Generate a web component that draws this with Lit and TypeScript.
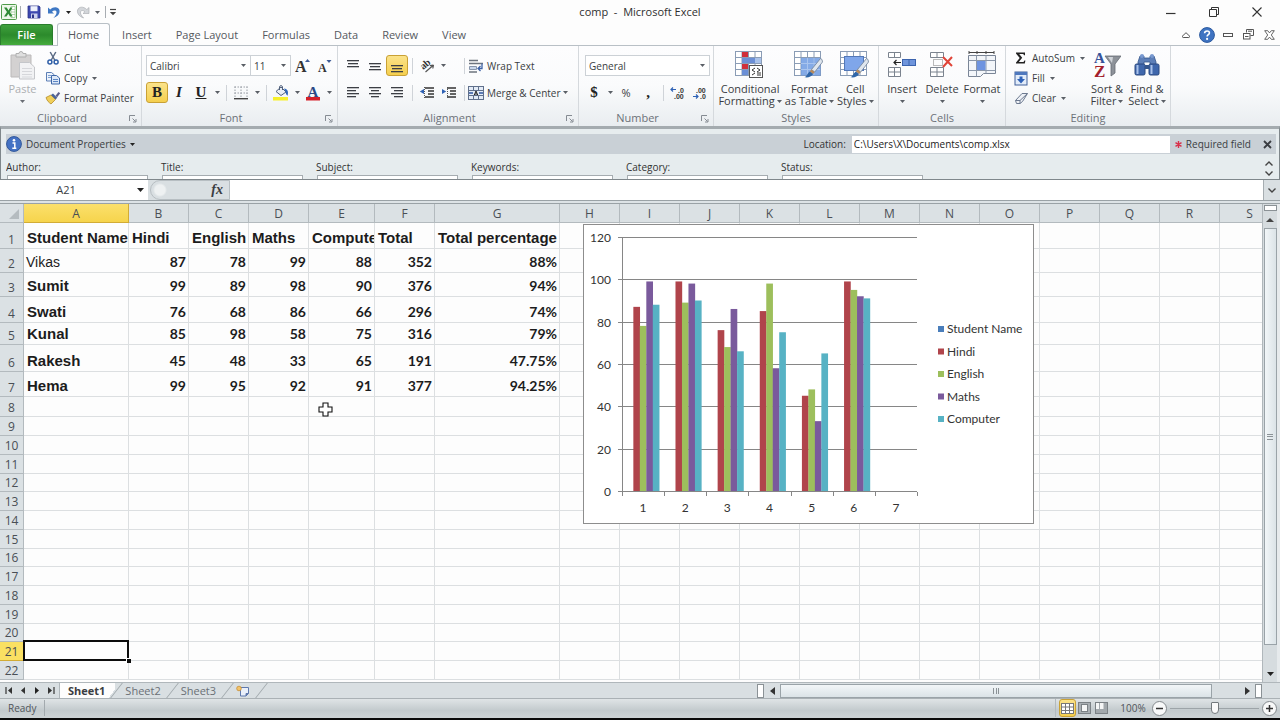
import { LitElement, html, svg, css, nothing } from "lit";
import { customElement, state } from "lit/decorators.js";
import { classMap } from "lit/directives/class-map.js";
import { styleMap } from "lit/directives/style-map.js";

/* ---------- icons ---------- */
const icon = (w: number, h: number, body: unknown) =>
  html`<svg width=${w} height=${h} viewBox="0 0 ${w} ${h}" aria-hidden="true">${body}</svg>`;

const caret = () => icon(5, 3, svg`<path d="M0 0h5L2.500 3z" fill="#5a5f66"/>`);

const linesIcon = (rows: [number, number, number][]) =>
  icon(14, 14, rows.map(([x, y, w]) => svg`<rect x=${x} y=${y} width=${w} height="1.300" fill="#3c3f45"/>`));

const gridCells = (w: number, h: number, cols: number, rows: number) => svg`
  <rect x=".5" y=".5" width=${w} height=${h} fill="#fff" stroke="#8a9cb5"/>
  ${Array.from({ length: cols - 1 }, (_, i) => svg`<path d="M${((i + 1) * w) / cols + 0.5} .5v${h}" stroke="#8a9cb5" fill="none"/>`)}
  ${Array.from({ length: rows - 1 }, (_, i) => svg`<path d="M.5 ${((i + 1) * h) / rows + 0.5}h${w}" stroke="#8a9cb5" fill="none"/>`)}`;

const brush = svg`
  <path d="M28 8.500 26.500 7.500 17.500 18.500l3.200 2.600L28.500 11z" fill="#dfe6ee" stroke="#6d7f96" stroke-width=".8"/>
  <path d="M17.500 18.500l3.200 2.600-1.700 2-3.300-2.500z" fill="#b98a5a"/>
  <path d="M15.700 20.400l3.400 2.700c-1.600 3-5.200 3.700-8.600 3.200 2.600-1.300 2.900-4.300 5.200-5.900z" fill="#2f66a8"/>`;

const I = {
  excel: icon(16, 16, svg`
    <rect x=".5" y=".5" width="15" height="15" rx="1" fill="#eef7ea" stroke="#4f9a4a"/>
    <path d="M10 2.500h4v11h-4z" fill="#fff" stroke="#8fc28a" stroke-width=".7"/>
    <path d="M10 5.500h4M10 8h4M10 10.500h4" stroke="#8fc28a" stroke-width=".7"/>
    <path d="M3 3.500h2.700L7.500 6.500 9.200 3.500h2.300L8.800 8l2.900 4.500H9L7.300 9.700 5.500 12.500H3L6 8z" fill="#2f8a35"/>`),
  save: icon(14, 14, svg`
    <path d="M1 1h11l1 1v11H1z" fill="#3d49b0" stroke="#2c3488" stroke-width=".8"/>
    <rect x="3.500" y="1.200" width="7" height="5" fill="#eef1fb"/>
    <rect x="4" y="8.500" width="6.500" height="4.500" fill="#cdd3ee"/>
    <rect x="5" y="9.500" width="2" height="3.500" fill="#2c3488"/>`),
  undo: icon(14, 14, svg`
    <path d="M1 2.500v6h6L5 6.700C6.500 5.300 8.800 5 9.400 6.600c.6 1.800-.6 4-3 6.400C11 11.500 13.200 8.200 12.400 5 11.300 1.400 6.300 1.200 3.200 4.600z" fill="#3f78c4"/>`),
  redo: icon(14, 14, svg`
    <path d="M13 2.500v6H7l2-1.800C7.500 5.300 5.200 5 4.600 6.600c-.6 1.800.6 4 3 6.400C3 11.500.8 8.200 1.600 5 2.700 1.400 7.700 1.200 10.800 4.600z" fill="#d3d6da" stroke="#a4a8ad" stroke-width=".6"/>`),
  customise: icon(8, 8, svg`<path d="M1 1.500h6" stroke="#444" stroke-width="1.200"/><path d="M.8 4h6.400L4 7.200z" fill="#444"/>`),
  min: icon(10, 10, svg`<path d="M0 6.500h9.500" stroke="#333" stroke-width="1.200"/>`),
  restore: icon(10, 10, svg`<path d="M.5 2.500h7v7h-7zM2.500 2.500v-2h7v7h-2" fill="none" stroke="#333"/>`),
  close: icon(10, 10, svg`<path d="M.5.500l9 9M9.500.500l-9 9" stroke="#333" stroke-width="1.100"/>`),
  collapse: icon(10, 8, svg`<path d="M1 5.500 5 1.700l4 3.800-1.200 1H2.200z" fill="#fff" stroke="#555"/>`),
  help: icon(16, 16, svg`
    <circle cx="8" cy="8" r="7.400" fill="#3f74c2" stroke="#2c5a9f"/>
    <path d="M5.600 6.200C5.700 3.300 10.500 3.300 10.400 6c0 1.600-2.300 1.700-2.300 3.500" fill="none" stroke="#fff" stroke-width="1.600"/>
    <circle cx="8.100" cy="11.900" r="1.100" fill="#fff"/>`),
  docMin: icon(10, 6, svg`<rect x=".5" y="1.500" width="9" height="3" fill="#fff" stroke="#555"/>`),
  docRestore: icon(11, 11, svg`<path d="M3.500 3.500v-3h7v6h-3M5 2.200h4" fill="none" stroke="#555"/><rect x=".5" y="4.500" width="6.500" height="5.500" fill="#fff" stroke="#555"/><path d="M2 7.500h3.500" stroke="#555"/>`),
  docClose: icon(11, 10, svg`<path d="M.7.700h3l1.800 2.200L7.300.700h3L7.300 5l3 4.300h-3L5.500 7.100 3.700 9.300h-3L3.700 5z" fill="#fff" stroke="#555" stroke-width=".9"/>`),
  paste: icon(26, 30, svg`
    <path d="M1 4h20v22H1z" fill="#cfcdcd" stroke="#b5b3b3"/>
    <path d="M6 2.500h3a2 2 0 0 1 4 0h3V6H6z" fill="#dcdcdc" stroke="#a8a8a8"/>
    <path d="M9.500 11.500h10l5 4.500v12h-15z" fill="#f1f2f4" stroke="#bfc1c5"/>
    <path d="M12 17.500h10M12 20.500h10M12 23.500h10M12 26h10" stroke="#d2d4d8"/>`),
  cut: icon(14, 14, svg`
    <path d="M4.200 1 9 9.500M9.800 1 5 9.500" stroke="#5b6b85" stroke-width="1.500"/>
    <circle cx="3.900" cy="11" r="2" fill="none" stroke="#2f5fa8" stroke-width="1.500"/>
    <circle cx="10.100" cy="11" r="2" fill="none" stroke="#2f5fa8" stroke-width="1.500"/>`),
  copy: icon(16, 14, svg`
    <path d="M1.500 1.500h5l3 2.500v6h-8z" fill="#eaf1fb" stroke="#5c7fb5"/><path d="M3 4.500h3M3 6.500h4" stroke="#7fa0d0"/>
    <path d="M6.500 4.500h5l3 2.500v6h-8z" fill="#dce8f8" stroke="#3f68a8"/><path d="M8 8.500h5M8 10.500h5" stroke="#5c86c4"/>`),
  painter: icon(16, 14, svg`
    <path d="M1 6.500 6 4l4.500 4.500L6 13C4 11.500 2 10 1 6.500z" fill="#f0cf5a" stroke="#b48a28" stroke-width=".8"/>
    <path d="M6 4l2-1.500 4.300 4.300-1.800 1.700z" fill="#49659a"/>
    <path d="M10.500 4.800 13.500 1l1.700 1.300-3 4z" fill="#5a5f8c"/>`),
  growA: icon(16, 16, svg`<text x="0" y="14" font-family="Liberation Serif, serif" font-size="16" font-weight="700" fill="#333">A</text><path d="M10 4l2.500-3L15 4z" fill="#3d5b96"/>`),
  shrinkA: icon(16, 16, svg`<text x="1" y="14" font-family="Liberation Serif, serif" font-size="12" font-weight="700" fill="#333">A</text><path d="M9.500 2h5L12 5z" fill="#3d5b96"/>`),
  borders: icon(14, 14, svg`<path d="M.5 1h13M.5 7h13M1 .5v12M7 .5v12M13 .5v12" stroke="#9a9fa6" stroke-dasharray="1.500 1.500" fill="none"/><path d="M0 12.700h14" stroke="#444" stroke-width="1.400"/>`),
  fill: icon(16, 16, svg`
    <path d="M3 6.500 8 2l5 5-5 3.500z" fill="#e9eef5" stroke="#51617c"/><path d="M6.500 5V1.800c0-1.500 3-1.500 3 0V5" fill="none" stroke="#51617c"/>
    <path d="M11 3.500c3.800.3 4.700 3.500 3.600 7.200-1.200-.7-2-2.200-2-4z" fill="#2f66b8"/><rect x="0" y="12" width="15" height="3.500" fill="#f7f02a"/>`),
  fontColor: icon(16, 16, svg`<text x="2.500" y="11.500" font-family="Liberation Serif, serif" font-size="15" font-weight="700" fill="#2c4a86">A</text><rect x="1" y="12" width="14" height="3.500" fill="#d5202a"/>`),
  alTop: linesIcon([[1, 1, 12], [2, 4, 10], [1, 7, 12]]),
  alMid: linesIcon([[1, 4, 12], [2, 7, 10], [1, 10, 12]]),
  alBot: linesIcon([[1, 6, 12], [2, 9, 10], [1, 12, 12]]),
  left: linesIcon([[1, 1, 12], [1, 4, 9], [1, 7, 12], [1, 10, 9]]),
  center: linesIcon([[1, 1, 12], [3, 4, 8], [1, 7, 12], [3, 10, 8]]),
  right: linesIcon([[1, 1, 12], [4, 4, 9], [1, 7, 12], [4, 10, 9]]),
  orient: icon(16, 16, svg`<text x="2" y="10" font-family="Liberation Serif, serif" font-size="10" font-weight="700" fill="#333" transform="rotate(-40 6 8)">ab</text><path d="M6.500 14 14 7.500M14.500 7l-3.500.7M14.500 7l-.7 3.500" stroke="#555" stroke-width="1.200" fill="none"/>`),
  dedent: icon(16, 14, svg`<path d="M6 2h9M9 5h6M9 8h6M6 11h9" stroke="#333" stroke-width="1.400"/><path d="M5.500 1v12" stroke="#555" stroke-dasharray="1 1"/><path d="M5 3v5L.800 5.500z" fill="#2f62b5"/>`),
  indent: icon(16, 14, svg`<path d="M6 2h9M9 5h6M9 8h6M6 11h9" stroke="#333" stroke-width="1.400"/><path d="M6.500 1v12" stroke="#555" stroke-dasharray="1 1"/><path d="M1 3v5l4.200-2.500z" fill="#2f62b5"/>`),
  wrap: icon(16, 16, svg`<path d="M1 2.500h9M1 5.500h14M1 14h8" stroke="#6d747e" stroke-width="1.400"/><path d="M1.500 8.500h7v3h-7z" fill="#c8d6ea" stroke="#8896ac"/><path d="M14 5.500v5h-4M12.500 8 10 10.500l2.500 2.500" fill="none" stroke="#3d62a6" stroke-width="1.300"/>`),
  merge: icon(16, 16, svg`<rect x=".5" y="1.500" width="15" height="13" fill="#e4ecf7" stroke="#60708c"/><path d="M.5 5.500h15M.5 10.500h15M5.500 1.500v4M10.500 1.500v4M5.500 10.500v4M10.500 10.500v4" stroke="#60708c"/><path d="M1 8h4M15 8h-4" stroke="#2f55a0" stroke-width="1.500"/><path d="M6.300 10 8 6l1.700 4M7 9h2" stroke="#222" fill="none"/>`),
  incDec: icon(16, 14, svg`<path d="M1 3.500h5M3 1.500 1 3.500l2 2" stroke="#2f62b5" fill="none" stroke-width="1.200"/>
    <text x="8" y="6.500" font-family="Liberation Sans, sans-serif" font-size="7" font-weight="700" fill="#333">.0</text><text x="4" y="13" font-family="Liberation Sans, sans-serif" font-size="7" font-weight="700" fill="#333">.00</text>`),
  decDec: icon(16, 14, svg`<path d="M1 10.500h5M4 8.500l2 2-2 2" stroke="#2f62b5" fill="none" stroke-width="1.200"/>
    <text x="4" y="6.500" font-family="Liberation Sans, sans-serif" font-size="7" font-weight="700" fill="#333">.00</text><text x="8" y="13" font-family="Liberation Sans, sans-serif" font-size="7" font-weight="700" fill="#333">.0</text>`),
  cond: icon(30, 28, svg`${gridCells(26, 24, 4, 4)}
    <rect x="7" y="1" width="6" height="5" fill="#cf2f3a"/><rect x="7" y="7" width="6" height="5" fill="#6b8fd6"/><rect x="13" y="7" width="7" height="5" fill="#6b8fd6"/>
    <rect x="7" y="13" width="6" height="5" fill="#cf2f3a"/><rect x="7" y="19" width="6" height="5" fill="#6b8fd6"/><rect x="20" y="7" width="6" height="5" fill="#a9c2ea"/>
    <rect x="14.500" y="14.500" width="13" height="12" fill="#fff" stroke="#555"/><path d="M20 17l-3 2 3 2M17 24l3-2M22 17l3 2-3 2M22 24h4M22 22h4" stroke="#333" fill="none"/>`),
  fmtTable: icon(30, 28, svg`${gridCells(26, 24, 4, 4)}<rect x="7" y="7" width="19.500" height="17.500" fill="#6f9be2" fill-opacity=".85"/><path d="M13.500 7v17M20 7v17M7 12.500h19M7 18.500h19" stroke="#a9c4ee" fill="none"/>${brush}`),
  cellStyles: icon(30, 28, svg`${gridCells(26, 24, 4, 4)}<rect x="4.500" y="5.500" width="19" height="14" fill="#7fa6ea" stroke="#5378b8"/>${brush}`),
  insert: icon(30, 28, svg`<path d="M1.500 1.500h12v5h-12zM7.500 1.500v5M1.500 16.500h12v9h-12zM7.500 16.500v9M1.500 21h12" fill="#fff" stroke="#7b838e"/><rect x="15.500" y="8.500" width="13" height="6" fill="#6f95dc" stroke="#3c64ae"/><path d="M22 8.500v6" stroke="#3c64ae"/><path d="M7 11.500h7M9.500 9 7 11.500 9.500 14" stroke="#222" fill="none" stroke-width="1.200"/>`),
  del: icon(30, 28, svg`<path d="M3.500 1.500h13v5h-13zM10 1.500v5M3.500 16.500h13v9h-13zM10 16.500v9M3.500 21h13" fill="#fff" stroke="#7b838e"/><path d="M6.500 8.500h9v6h-9z" fill="none" stroke="#777" stroke-dasharray="1 1"/><path d="M16 6l9 9M25 6l-9 10" stroke="#e04438" stroke-width="2"/>`),
  format: icon(30, 28, svg`<path d="M2 1.500h25M2 0v3M10 0v3M19 0v3M27 0v3" stroke="#444" fill="none"/><path d="M1.500 4.500h27v18h-12l-3 3h-12z" fill="#f3f6fa" stroke="#7a8596"/><path d="M1.500 9.500h27M1.500 19.500h27M9.500 4.500v21M19 4.500v18" stroke="#8b97a9" fill="none"/><rect x="10" y="10" width="8.500" height="9" fill="#6d93e0"/>`),
  sum: icon(12, 14, svg`<path d="M1 1.500h9v2.800H9L8.300 3H4.200l3 3.800-3.400 4.200h4.700l.9-1.500h1L9.800 12.500H1v-.9l3.700-4.500L1 2.400z" fill="#222"/>`),
  fillDown: icon(14, 15, svg`<rect x="1" y="1" width="12" height="13" fill="#e2ecf9" stroke="#40609a"/><rect x="1" y="1" width="12" height="3" fill="#4f78bd"/><path d="M5.500 5.500h3V8H11l-4 4.500L3 8h2.500z" fill="#2f62b8"/>`),
  eraser: icon(15, 13, svg`<path d="M1.500 8.500 8 1.500h5.500L8.500 9.500 6 11.500H2.500z" fill="#eef1f6" stroke="#6d7a90"/><path d="M1.500 8.500H6L13.500 1.500M6 8.500v3" fill="none" stroke="#6d7a90"/>`),
  sort: icon(28, 30, svg`<text x="1" y="12" font-family="Liberation Serif, serif" font-size="15" font-weight="700" fill="#35539a">A</text><text x="1" y="26" font-family="Liberation Serif, serif" font-size="17" font-weight="700" fill="#a3202c">Z</text>
    <path d="M12 5h16l-6 8v9l-4 3V13z" fill="#8d9299" stroke="#666b72" stroke-width=".8"/><path d="M15 6h5l-1 6z" fill="#cfd3d8"/>`),
  find: icon(28, 28, svg`<path d="M7 5h4v2h6V5h4l2 6v3h-6v-3h-6v3H5v-3z" fill="#5d7fb8" stroke="#34558c" stroke-width=".8"/><circle cx="9" cy="5" r="2" fill="#7a9ad0"/><circle cx="19" cy="5" r="2" fill="#7a9ad0"/>
    <rect x="2" y="13" width="10" height="11" rx="1.500" fill="#3f67ac" stroke="#2c4b80"/><rect x="16" y="13" width="10" height="11" rx="1.500" fill="#3f67ac" stroke="#2c4b80"/>
    <path d="M4.500 14v9M18.500 14v9" stroke="#a9c2ea" stroke-width="2"/><path d="M12 14h4v4h-4z" fill="#34558c"/>`),
  launcher: icon(8, 8, svg`<path d="M.5 6V.5H6M3.500 3.500l3 3M7 4v3H4" fill="none" stroke="#858b92"/>`),
  info: icon(16, 16, svg`<circle cx="8" cy="8" r="7.400" fill="#4472c4" stroke="#315799"/><circle cx="8" cy="4.200" r="1.300" fill="#fff"/><path d="M6.500 7h2.300v5M6.300 12.200h4" stroke="#fff" stroke-width="1.500" fill="none"/>`),
  x: icon(9, 9, svg`<path d="M1 1l7 7M8 1 1 8" stroke="#3a3d42" stroke-width="1.800"/>`),
  star: icon(7, 7, svg`<path d="M3.500 0v7M.5 1.700l6 3.600M6.500 1.700l-6 3.600" stroke="#d8304a" stroke-width="1.400"/>`),
  chevUp: icon(8, 5, svg`<path d="M.5 4.500 4 1l3.500 3.500" fill="none" stroke="#444" stroke-width="1.400"/>`),
  chevDown: icon(8, 5, svg`<path d="M.5.500 4 4 7.500.500" fill="none" stroke="#444" stroke-width="1.400"/>`),
  triDown: icon(7, 4, svg`<path d="M0 0h7L3.500 4z" fill="#222"/>`),
  triSmall: icon(5, 3, svg`<path d="M0 0h5L2.500 3z" fill="#222"/>`),
  triUp: icon(8, 4, svg`<path d="M0 4h8L4 0z" fill="#444"/>`),
  triL: icon(5, 8, svg`<path d="M5 0v8L0 4z" fill="#333"/>`),
  triR: icon(5, 8, svg`<path d="M0 0v8l5-4z" fill="#333"/>`),
  first: icon(8, 7, svg`<path d="M1 0v7" stroke="#333" stroke-width="1.200"/><path d="M7 0v7L3 3.500z" fill="#333"/>`),
  prev: icon(8, 7, svg`<path d="M6 0v7L2 3.500z" fill="#333"/>`),
  next: icon(8, 7, svg`<path d="M2 0v7l4-3.500z" fill="#222"/>`),
  last: icon(8, 7, svg`<path d="M1 0v7l4-3.500z" fill="#333"/><path d="M7 0v7" stroke="#333" stroke-width="1.200"/>`),
  newSheet: icon(14, 12, svg`<path d="M4.500 2.500h8v6l-2.500 2.500H4.500z" fill="#eaf0fa" stroke="#5f79ad"/><path d="M12.500 8.500H10V11" fill="#5f79ad" stroke="#5f79ad"/><circle cx="3" cy="3.500" r="2.300" fill="#f2c36a" stroke="#c98f35" stroke-width=".8"/>`),
  vNormal: icon(13, 11, svg`<rect x=".5" y=".5" width="12" height="10" fill="#fff" stroke="#777"/><path d="M.5 4h12M.5 7.500h12M4.500.500v10M8.500.500v10" stroke="#777"/>`),
  vLayout: icon(13, 12, svg`<rect x=".5" y=".5" width="12" height="11" fill="#a9afb3" stroke="#7b8185"/><rect x="3.500" y="2.500" width="6" height="7" fill="#f5f6f6" stroke="#7b8185"/>`),
  vBreak: icon(13, 12, svg`<rect x=".5" y=".5" width="12" height="11" fill="#a2a8ac" stroke="#7b8185"/><path d="M1 1h3v6H1zM5 1h3.500v6H5z" fill="#f5f6f6"/>`),
  cursor: icon(15, 15, svg`<path d="M5 1h5v4h4v5h-4v4H5v-4H1V5h4z" fill="#fff" stroke="#111" stroke-width="1.100"/>`),
};

/* ---------- sheet data ---------- */
const COLUMNS: [string, number][] = [
  ["A", 105], ["B", 60], ["C", 60], ["D", 60], ["E", 66], ["F", 60], ["G", 125],
  ..."HIJKLMNOPQRS".split("").map((c): [string, number] => [c, 60]),
];
const ROW_HEIGHTS = [26, 24, 24, 26, 22, 27, 25, 20, 19, 19, 19, 18, 19, 19, 19, 18, 19, 19, 19, 18, 19, 19];
const CELLS: string[][] = [
  ["Student Name", "Hindi", "English", "Maths", "Computer", "Total", "Total percentage"],
  ["Vikas", "87", "78", "99", "88", "352", "88%"],
  ["Sumit", "99", "89", "98", "90", "376", "94%"],
  ["Swati", "76", "68", "86", "66", "296", "74%"],
  ["Kunal", "85", "98", "58", "75", "316", "79%"],
  ["Rakesh", "45", "48", "33", "65", "191", "47.75%"],
  ["Hema", "99", "95", "92", "91", "377", "94.25%"],
];
const SERIES: [string, string][] = [
  ["Student Name", "#4a7ebb"], ["Hindi", "#b0444b"], ["English", "#9dbf5c"], ["Maths", "#7a5a9c"], ["Computer", "#57b2c4"],
];

/* ---------- chart ---------- */
@customElement("marks-chart")
class MarksChart extends LitElement {
  static styles = css`
    :host { display: block; background: #fff; border: 1px solid #8d8d8d; }
    svg { display: block; width: 100%; height: auto; }
    text { font: 12px Lato, "Open Sans", sans-serif; fill: #333; }
  `;
  render() {
    const x0 = 38, x1 = 333, y0 = 267, y1 = 13;
    const step = (x1 - x0) / 7, bar = step / 6.5, unit = (y0 - y1) / 120;
    return html`<svg viewBox="0 0 449 298" role="img" aria-label="Marks by student">
      ${[0, 20, 40, 60, 80, 100, 120].map((v) => svg`
        <path d="M${x0 - 4} ${Math.round(y0 - v * unit) - 0.5}H${x1}" stroke="#868686"/>
        <text x="27" y=${Math.round(y0 - v * unit) + 4} text-anchor="end">${v}</text>`)}
      <path d="M${x0 + 0.5} ${y1}V${y0}" stroke="#868686"/>
      ${Array.from({ length: 8 }, (_, i) => svg`<path d="M${Math.round(x0 + i * step) + 0.5} ${y0}v4" stroke="#868686"/>`)}
      ${[1, 2, 3, 4, 5, 6, 7].map((n, i) => svg`<text x=${x0 + (i + 0.5) * step} y="287" text-anchor="middle">${n}</text>`)}
      ${CELLS.slice(1).map((row, i) => [1, 2, 3, 4].map((s) => {
        const h = Number(row[s]) * unit;
        return svg`<rect x=${x0 + i * step + bar * (0.75 + s)} y=${y0 - 1 - h} width=${bar + 0.2} height=${h} fill=${SERIES[s][1]}/>`;
      }))}
      ${SERIES.map(([name, color], i) => svg`
        <rect x="354" y=${101 + i * 22.5} width="6" height="6" fill=${color}/>
        <text x="363" y=${108 + i * 22.5}>${name}</text>`)}
    </svg>`;
  }
}

/* ---------- application ---------- */
@customElement("app-root")
class AppRoot extends LitElement {
  @state() private tab = "Home";
  @state() private sheet = "Sheet1";

  static styles = css`
    :host { display: flex; flex-direction: column; height: 100vh; overflow: hidden; box-sizing: border-box;
      border-bottom: 2px solid #0a0a0a; background: #fdfdfd; color: #3a3d42;
      font: 11px/12px "Open Sans", "Noto Sans", sans-serif; }
    *, *::before, *::after { box-sizing: border-box; }
    button, input, select { font: inherit; color: inherit; margin: 0; padding: 0; border: 0; background: none; border-radius: 0; outline: none; }
    svg { display: block; flex: none; }
    h1 { margin: 0; font: 11px/24px "Open Sans", sans-serif; color: #2f2f2f; }

    .title { display: grid; grid-template-columns: 1fr auto 1fr; align-items: center; height: 24px; flex: none; }
    .qat { display: flex; align-items: center; height: 22px; padding-left: 1px; }
    .qat button { display: flex; }
    .qat .gap { width: 1px; height: 12px; background: #a8adb2; margin: 0 3px; }
    .qat .logo { display: flex; }
    .qat .w { width: 20px; justify-content: center; }
    .qat .n { width: 9px; justify-content: center; }
    .win { display: flex; justify-content: flex-end; padding-right: 2px; }
    .win button { width: 43px; display: flex; justify-content: center; align-items: center; height: 24px; }

    .tabs { display: flex; height: 22px; flex: none; align-items: stretch; border-bottom: 1px solid #b9c0c6; }
    .tabs button { padding: 0 12px; color: #55595f; height: 21px; }
    .tabs .file { width: 53px; background: linear-gradient(#3fa03c, #2c8a2c 50%, #45ab3d); border: 1px solid #2a7d2c; border-bottom: 0;
      border-radius: 3px 3px 0 0; color: #fff; margin-right: 4px; font-weight: 600; }
    .tabs .on { padding: 0 10px; margin-top: -1px; height: 23px; background: #fdfdfe; border: 1px solid #b9c0c6; border-bottom: 0; border-radius: 3px 3px 0 0; }
    .docbtns { margin-left: auto; display: flex; align-items: center; }
    .tabs .docbtns button { padding: 0; width: 21px; display: flex; justify-content: center; align-items: center; }

    .ribbon { display: flex; height: 80px; flex: none; background: linear-gradient(#fdfdfe, #fafbfc 50%, #e9edf0); }
    .group { display: flex; flex-direction: column; border-right: 1px solid #d5d9dd; flex: none; }
    .body { display: flex; flex: 1; }
    .cap { position: relative; height: 16px; text-align: center; color: #6c7178; line-height: 16px; }
    .cap.launch { padding-right: 17px; }
    .cap button { position: absolute; right: 4px; top: 5px; }
    .g-clip { width: 142px; } .g-font { width: 196px; } .g-align { width: 241px; } .g-num { width: 135px; }
    .g-styles { width: 165px; } .g-cells { width: 127px; } .g-edit { width: 165px; }
    .rows { display: flex; flex-direction: column; gap: 6px; padding: 9px 4px 0; }
    .row { display: flex; align-items: center; height: 21px; }
    .row button { display: flex; align-items: center; justify-content: center; height: 21px; width: 22px; }
    .row .dd { width: 10px; }
    .row .text { width: auto; gap: 3px; white-space: nowrap; font-size: 10px; }
    .row .active, .view .active { background: linear-gradient(#fbe38a, #f5cf4e); border: 1px solid #c9a135; border-radius: 3px; }
    .sep { width: 8px; height: 16px; background: linear-gradient(#cfd3d8, #cfd3d8) center / 1px 100% no-repeat; }
    .space { width: 12px; }
    .serif { font: 700 15px/21px "Liberation Serif", serif; color: #222; }
    .it { font-style: italic; }
    .un { text-decoration: underline; }
    .pick { display: grid; align-items: center; height: 21px; border: 1px solid #ccd1d6; background: #fff; }
    .pick select, .pick svg { grid-area: 1 / 1; }
    .pick select { appearance: none; width: 100%; height: 19px; padding-left: 3px; background: transparent; font-size: 10px; }
    .pick svg { justify-self: end; margin-right: 4px; pointer-events: none; }
    .w-font { width: 105px; } .w-size { width: 41px; margin: 0 1px 0 -1px; } .w-num { width: 125px; margin-left: 2px; }
    .list { display: flex; flex-direction: column; padding-top: 2px; font-size: 10px; }
    .list button { display: flex; align-items: center; gap: 3px; height: 20px; white-space: nowrap; }
    .list .ic { width: 16px; display: flex; justify-content: center; }
    .list .dd { margin-left: 2px; }
    .large { display: flex; flex-direction: column; align-items: center; padding-top: 5px; white-space: nowrap; }
    .large .pic { height: 32px; display: flex; align-items: flex-start; }
    .large .ln { display: flex; align-items: center; gap: 2px; height: 12px; }
    .large:disabled { color: #a5a8ab; opacity: .9; }
    .bigs { justify-content: center; gap: 3px; }
    .c38 { gap: 0; } .c38 .large { width: 40px; }
    .g-clip .large { width: 45px; }
    .g-edit .body { padding-left: 7px; }
    .g-edit .list { width: 74px; }
    .g-edit .large { width: 40px; }

    .info { flex: none; height: 54px; background: #e6ecee; border: 1px solid #7f878b; border-top: 3px solid #a4abaf; padding: 5px 3px 0 5px; display: flex; flex-direction: column; overflow: hidden; }
    .infobar { display: flex; align-items: center; height: 20px; flex: none; background: #c9d0d6; font-size: 10px; }
    .infobar button { display: flex; align-items: center; gap: 4px; }
    .infobar .loc { margin-left: auto; color: #333; }
    .infobar input { width: 318px; height: 17px; background: #fff; margin: 0 5px 0 6px; padding-left: 2px; color: #222; }
    .req { display: flex; align-items: center; gap: 4px; margin-right: 8px; }
    .infobar .x { width: 17px; justify-content: center; }
    .props { display: flex; gap: 12px; flex: none; height: 26px; overflow: hidden; padding-top: 7px; }
    .props label { width: 143px; height: 40px; display: flex; flex-direction: column; gap: 2px; color: #333; flex: none; font-size: 10px; }
    .props input { border: 1px solid #a5acb0; background: #fff; height: 18px; margin: 0 1px; flex: none; }
    .scroller { margin-left: auto; display: flex; flex-direction: column; gap: 5px; padding: 0 3px; }
    .scroller button { display: flex; }

    .fbar { display: flex; flex: none; height: 20px; background: #d9dfe2; }
    .name { width: 148px; display: flex; align-items: center; background: #fff; }
    .name input { width: 132px; text-align: center; }
    .name button { width: 16px; display: flex; justify-content: center; }
    .fx { width: 80px; display: flex; align-items: center; justify-content: flex-end; padding-right: 6px; border: 1px solid #b7bec2; border-radius: 10px 0 0 10px; margin-left: 2px;
      background: radial-gradient(circle at 9px 9px, #eef1f2 5px, #d9dfe2 7px); font: italic 700 14px/18px "Liberation Serif", serif; }
    .fbar .fx { border: 1px solid #b7bec2; border-radius: 10px 0 0 10px; margin-left: 2px; padding-right: 6px; }
    .fbar .formula { flex: 1; min-width: 0; background: #fff; padding-left: 4px; }
    .fbar .more { width: 17px; display: flex; align-items: center; justify-content: center; border-left: 1px solid #a6adb1; }
    .strip { height: 4px; flex: none; background: #dde3e6; border-top: 1px solid #9aa2a6; border-bottom: 1px solid #9aa2a6; }

    .main { display: flex; flex: 1; min-height: 0; }
    .view-area { position: relative; flex: 1; min-width: 0; overflow: hidden; background: #fdfdfd; }
    table { table-layout: fixed; width: 1px; border-collapse: separate; border-spacing: 0; }
    th { padding: 0; font-weight: 400; font-size: 12px; line-height: 17px; color: #4a4f55; background: #dbe1e4; border-right: 1px solid #b3babe; border-bottom: 1px solid #b3babe; }
    thead th { height: 19px; padding-top: 1px; }
    tbody th { vertical-align: bottom; }
    thead .sel { background: linear-gradient(#fbe06c, #f6d44c); border-color: #d2ac35; }
    tbody .sel { background: #fae062; border-color: #d2ac35; }
    td { padding: 0 2px 1px; border-right: 1px solid #dcdfe1; border-bottom: 1px solid #dcdfe1; overflow: hidden; white-space: nowrap; vertical-align: bottom;
      font: 700 14px/18px Lato, "Open Sans", sans-serif; color: #1c1c1c; text-align: right; }
    .txt { text-align: left; font: 700 15px/18px "Liberation Sans", Arial, sans-serif; padding: 0 0 1px 3px; }
    .plain { font-size: 14px; font-weight: 400; padding-left: 2px; }
    .cur { position: relative; overflow: visible; }
    .cur::before { content: ""; position: absolute; inset: -2px -1px -1px -1px; border: 2px solid #0c0c0c; }
    .cur::after { content: ""; position: absolute; right: -3px; bottom: -3px; width: 5px; height: 5px; background: #0c0c0c; border: 1px solid #fff; border-width: 1px 0 0 1px; }
    marks-chart { position: absolute; left: 583px; top: 20px; width: 451px; }
    .pointer { position: absolute; left: 318px; top: 198px; }

    .vscroll { width: 18px; display: flex; flex-direction: column; align-items: center; background: #d6dcdf; border-left: 1px solid #b0b7bb; border-right: 3px solid #e6eaec; padding-top: 1px; }
    .split { width: 13px; height: 6px; border: 1px solid #8b9296; background: #fff; }
    .vscroll button { display: flex; align-items: center; justify-content: center; height: 17px; }
    .vthumb { flex: 1; width: 13px; border: 1px solid #9aa3a8; background: linear-gradient(90deg, #f2f6f8, #dbe3e7); display: flex; align-items: center; justify-content: center; margin-bottom: 20px; }
    .grip { width: 6px; height: 6px; border: 1px solid #8b9296; border-width: 1px 0; background: linear-gradient(#8b9296, #8b9296) center / 100% 1px no-repeat; }

    .bottom { display: flex; height: 16px; flex: none; background: #d9dfe2; border-top: 1px solid #b0b7bb; align-items: stretch; }
    .nav { display: flex; width: 59px; align-items: center; padding-left: 2px; }
    .nav button { display: flex; justify-content: center; width: 14px; }
    .sheets { display: flex; }
    .sheets button { position: relative; height: 15px; padding: 0 10px; line-height: 14px; color: #6a6f75; display: flex; align-items: center; }
    .sheets button::after { content: ""; position: absolute; right: -2px; top: 0; width: 1px; height: 15px; background: #9fa7ab; transform: skewX(-38deg); }
    .sheets .on { background: linear-gradient(128deg, #fdfdfd 0 90%, #d9dfe2 90%); font-weight: 700; color: #3a3d42; padding: 0 10px 0 8px; border-left: 1px solid #b0b7bb; }
    .hscroll { margin-left: auto; width: 505px; display: flex; align-items: center; }
    .hscroll .hs { width: 7px; height: 14px; border: 1px solid #8b9296; background: #fff; }
    .hscroll button { width: 16px; display: flex; justify-content: center; }
    .hthumb { flex: 1; height: 14px; border: 1px solid #9aa3a8; background: linear-gradient(#f2f6f8, #dbe3e7); display: flex; justify-content: center; align-items: center; margin-right: 27px; }
    .hthumb i { width: 6px; height: 6px; border: 1px solid #8b9296; border-width: 0 1px; background: linear-gradient(#8b9296, #8b9296) center / 1px 100% no-repeat; }
    .corner { width: 18px; }

    .status { display: flex; align-items: center; height: 20px; flex: none; background: linear-gradient(#dfe4e6, #c3cacd 60%, #cdd3d5); color: #50555a; border-top: 1px solid #aab1b5; padding-bottom: 1px; }
    .status .ready { padding: 0 8px; border-right: 1px solid #a3aaae; line-height: 16px; font-size: 10px; }
    .view { margin: 0 4px 0 auto; display: flex; align-items: center; border-left: 1px solid #b3babe; padding-left: 3px; }
    .view button { width: 17px; height: 18px; display: flex; align-items: center; justify-content: center; }
    .zoomlbl { width: 38px; text-align: center; font-size: 10px; }
    .status .round { width: 15px; height: 15px; border: 1px solid #83898d; border-radius: 50%; background: #f8f9f9; display: flex; align-items: center; justify-content: center; }
    .status input { appearance: none; width: 89px; height: 14px; margin: 0 3px; background: linear-gradient(#9da4a8, #9da4a8) center / 100% 1px no-repeat; }
    .status input::-webkit-slider-thumb { appearance: none; width: 8px; height: 12px; background: #fafafa; border: 1px solid #73797d; border-radius: 1px 1px 4px 4px; }
    .status .plus { margin-right: 3px; }
  `;

  private btn(pic: unknown, label: string, cls = "") {
    return html`<button class=${cls} aria-label=${label}>${pic}</button>`;
  }
  private dd(label: string) { return this.btn(caret(), `${label} options`, "dd"); }

  private large(pic: unknown, lines: string[], arrowBelow = false, disabled = false) {
    return html`<button class="large" ?disabled=${disabled}>
      <span class="pic">${pic}</span>
      ${lines.map((t, i) => html`<span class="ln">${t}${!arrowBelow && i === lines.length - 1 ? caret() : nothing}</span>`)}
      ${arrowBelow ? html`<span class="ln">${caret()}</span>` : nothing}
    </button>`;
  }
  private item(pic: unknown, label: string, arrow = false) {
    return html`<button><span class="ic">${pic}</span>${label}${arrow ? html`<span class="dd">${caret()}</span>` : nothing}</button>`;
  }
  private cap(name: string, launcher = false) {
    return html`<div class=${classMap({ cap: true, launch: launcher })}>${name}${launcher ? this.btn(I.launcher, `${name} settings`) : nothing}</div>`;
  }

  private ribbon() {
    return html`<div class="ribbon">
      <section class="group g-clip"><div class="body">
        ${this.large(I.paste, ["Paste"], true, true)}
        <div class="list">${this.item(I.cut, "Cut")}${this.item(I.copy, "Copy", true)}${this.item(I.painter, "Format Painter")}</div>
      </div>${this.cap("Clipboard", true)}</section>

      <section class="group g-font"><div class="body"><div class="rows">
        <div class="row">
          <span class="pick w-font"><select aria-label="Font"><option>Calibri</option></select>${caret()}</span>
          <span class="pick w-size"><select aria-label="Font size"><option>11</option></select>${caret()}</span>
          ${this.btn(I.growA, "Increase font size")}${this.btn(I.shrinkA, "Decrease font size")}
        </div>
        <div class="row">
          <button class="active"><span class="serif">B</span></button>
          <button><span class="serif it">I</span></button>
          <button><span class="serif un">U</span></button>${this.dd("Underline")}
          <span class="sep"></span>${this.btn(I.borders, "Borders")}${this.dd("Border")}
          <span class="sep"></span>${this.btn(I.fill, "Fill colour")}${this.dd("Fill")}${this.btn(I.fontColor, "Font colour")}${this.dd("Font colour")}
        </div></div></div>${this.cap("Font", true)}</section>

      <section class="group g-align"><div class="body"><div class="rows">
        <div class="row">
          ${this.btn(I.alTop, "Top align")}${this.btn(I.alMid, "Middle align")}${this.btn(I.alBot, "Bottom align", "active")}
          <span class="sep"></span>${this.btn(I.orient, "Orientation")}${this.dd("Orientation")}
          <span class="space"></span><span class="sep"></span>
          <button class="text">${I.wrap}Wrap Text</button>
        </div>
        <div class="row">
          ${this.btn(I.left, "Align left")}${this.btn(I.center, "Centre")}${this.btn(I.right, "Align right")}
          <span class="sep"></span>${this.btn(I.dedent, "Decrease indent")}${this.btn(I.indent, "Increase indent")}
          <span class="sep"></span><button class="text">${I.merge}Merge &amp; Center</button>${this.dd("Merge")}
        </div></div></div>${this.cap("Alignment", true)}</section>

      <section class="group g-num"><div class="body"><div class="rows">
        <div class="row"><span class="pick w-num"><select aria-label="Number format"><option>General</option></select>${caret()}</span></div>
        <div class="row">
          <button><span class="serif">$</span></button>${this.dd("Currency")}
          <button>%</button><button><span class="serif">,</span></button>
          <span class="sep"></span>${this.btn(I.incDec, "Increase decimal")}${this.btn(I.decDec, "Decrease decimal")}
        </div></div></div>${this.cap("Number", true)}</section>

      <section class="group g-styles"><div class="body bigs">
        ${this.large(I.cond, ["Conditional", "Formatting"])}${this.large(I.fmtTable, ["Format", "as Table"])}${this.large(I.cellStyles, ["Cell", "Styles"])}
      </div>${this.cap("Styles")}</section>

      <section class="group g-cells"><div class="body bigs c38">
        ${this.large(I.insert, ["Insert"], true)}${this.large(I.del, ["Delete"], true)}${this.large(I.format, ["Format"], true)}
      </div>${this.cap("Cells")}</section>

      <section class="group g-edit"><div class="body">
        <div class="list">${this.item(I.sum, "AutoSum", true)}${this.item(I.fillDown, "Fill", true)}${this.item(I.eraser, "Clear", true)}</div>
        ${this.large(I.sort, ["Sort &", "Filter"])}${this.large(I.find, ["Find &", "Select"])}
      </div>${this.cap("Editing")}</section>
    </div>`;
  }

  private table() {
    return html`<table>
      <colgroup><col style=${styleMap({ width: "24px" })} />${COLUMNS.map(([, w]) => html`<col style=${styleMap({ width: `${w}px` })} />`)}</colgroup>
      <thead><tr><th>${icon(22, 16, svg`<path d="M19 3v10H9z" fill="#b5bcc0"/>`)}</th>${COLUMNS.map(([c]) => html`<th scope="col" class=${classMap({ sel: c === "A" })}>${c}</th>`)}</tr></thead>
      <tbody>${ROW_HEIGHTS.map((h, r) => html`<tr style=${styleMap({ height: `${h}px` })}>
        <th scope="row" class=${classMap({ sel: r === 20 })}>${r + 1}</th>
        ${COLUMNS.map((_, c) => {
          const value = CELLS[r]?.[c];
          return html`<td class=${classMap({ txt: r === 0 || c === 0, plain: r === 1 && c === 0, cur: r === 20 && c === 0 })}>${value ?? nothing}</td>`;
        })}
      </tr>`)}</tbody>
    </table>`;
  }

  render() {
    return html`
      <header class="title">
        <div class="qat">
          <span class="logo">${I.excel}</span><span class="gap"></span>
          ${this.btn(I.save, "Save", "w")}${this.btn(I.undo, "Undo", "w")}${this.btn(I.triSmall, "Undo list", "n")}
          ${this.btn(I.redo, "Redo", "w")}${this.btn(caret(), "Redo list", "n")}<span class="gap"></span>${this.btn(I.customise, "Customise toolbar")}
        </div>
        <h1>comp&nbsp; -&nbsp; Microsoft Excel</h1>
        <div class="win">${this.btn(I.min, "Minimise")}${this.btn(I.restore, "Restore")}${this.btn(I.close, "Close")}</div>
      </header>
      <nav class="tabs">
        <button class="file">File</button>
        ${["Home", "Insert", "Page Layout", "Formulas", "Data", "Review", "View"].map((t) => html`
          <button class=${classMap({ on: t === this.tab })} @click=${() => (this.tab = t)}>${t}</button>`)}
        <div class="docbtns">${this.btn(I.collapse, "Collapse ribbon")}${this.btn(I.help, "Help")}${this.btn(I.docMin, "Minimise workbook")}${this.btn(I.docRestore, "Restore workbook")}${this.btn(I.docClose, "Close workbook")}</div>
      </nav>
      ${this.ribbon()}
      <section class="info">
        <div class="infobar">
          <button>${I.info}<span>Document Properties</span>${I.triSmall}</button>
          <label class="loc" for="loc">Location:</label><input id="loc" .value=${"C:\\Users\\X\\Documents\\comp.xlsx"} />
          <span class="req">${I.star}Required field</span>
          ${this.btn(I.x, "Close panel", "x")}
        </div>
        <div class="props">
          ${["Author:", "Title:", "Subject:", "Keywords:", "Category:", "Status:"].map((l) => html`<label>${l}<input /></label>`)}
          <div class="scroller">${this.btn(I.chevUp, "Scroll up")}${this.btn(I.chevDown, "Scroll down")}</div>
        </div>
      </section>
      <div class="fbar">
        <div class="name"><input aria-label="Name box" .value=${"A21"} />${this.btn(I.triDown, "Names")}</div>
        <button class="fx" aria-label="Insert function">fx</button>
        <input class="formula" aria-label="Formula" />
        ${this.btn(I.chevDown, "Expand formula bar", "more")}
      </div>
      <div class="strip"></div>
      <main class="main">
        <div class="view-area">${this.table()}<marks-chart></marks-chart><span class="pointer">${I.cursor}</span></div>
        <div class="vscroll"><span class="split"></span>${this.btn(I.triUp, "Scroll up")}<div class="vthumb"><span class="grip"></span></div>${this.btn(I.triDown, "Scroll down")}</div>
      </main>
      <div class="bottom">
        <div class="nav">${this.btn(I.first, "First sheet")}${this.btn(I.prev, "Previous sheet")}${this.btn(I.next, "Next sheet")}${this.btn(I.last, "Last sheet")}</div>
        <div class="sheets">
          ${["Sheet1", "Sheet2", "Sheet3"].map((s) => html`<button class=${classMap({ on: s === this.sheet })} @click=${() => (this.sheet = s)}>${s}</button>`)}
          ${this.btn(I.newSheet, "Insert sheet")}
        </div>
        <div class="hscroll"><span class="hs"></span>${this.btn(I.triL, "Scroll left")}<div class="hthumb"><i></i></div>${this.btn(I.triR, "Scroll right")}<span class="hs"></span></div>
        <span class="corner"></span>
      </div>
      <footer class="status">
        <span class="ready">Ready</span>
        <div class="view">${this.btn(I.vNormal, "Normal view", "active")}${this.btn(I.vLayout, "Page layout view")}${this.btn(I.vBreak, "Page break view")}</div>
        <span class="zoomlbl">100%</span>
        ${this.btn(icon(7, 7, svg`<path d="M0 3.500h7" stroke="#333" stroke-width="1.500"/>`), "Zoom out", "round")}
        <input type="range" aria-label="Zoom" min="0" max="100" .value=${"50"} />
        ${this.btn(icon(7, 7, svg`<path d="M0 3.500h7M3.500 0v7" stroke="#333" stroke-width="1.500"/>`), "Zoom in", "round plus")}
      </footer>`;
  }
}
